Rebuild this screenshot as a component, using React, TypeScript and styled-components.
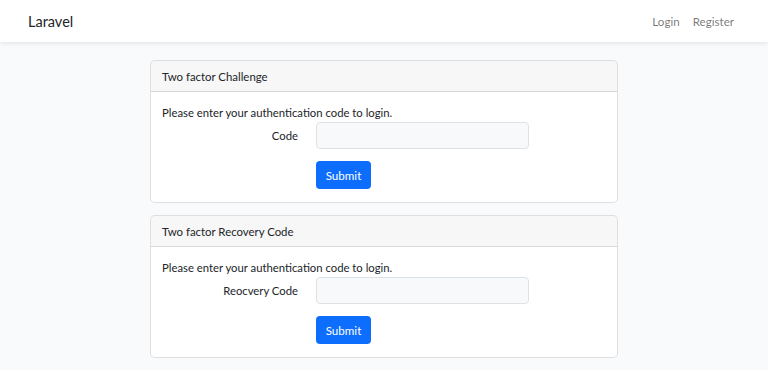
import React from "react";
import styled, { createGlobalStyle } from "styled-components";

const Global = createGlobalStyle`
  body {
    margin: 0;
    background: #f8fafc;
    font-family: "Lato", "Noto Sans", sans-serif;
    color: #212529;
  }
`;

const Navbar = styled.nav`
  height: 42px;
  background: #fff;
  box-shadow: 0 2px 4px rgba(0, 0, 0, 0.075);
  display: flex;
  align-items: center;
  justify-content: space-between;
  padding: 0 34px 0 28px;
`;

const Brand = styled.a`
  font-size: 14.5px;
  color: #212529;
  text-decoration: none;
`;

const NavLinks = styled.div`
  display: flex;
  gap: 13px;
`;

const NavLink = styled.a`
  font-size: 11.6px;
  color: rgba(0, 0, 0, 0.55);
  text-decoration: none;
`;

const Main = styled.main`
  padding-top: 18px;
`;

const Container = styled.div`
  width: 468px;
  margin: 0 auto;
  display: flex;
  flex-direction: column;
  gap: 12px;
`;

const Card = styled.section`
  background: #fff;
  border: 1px solid rgba(0, 0, 0, 0.125);
  border-radius: 5px;
  overflow: hidden;
`;

const CardHeader = styled.div`
  height: 30px;
  display: flex;
  align-items: center;
  padding: 0 11px;
  background: rgba(0, 0, 0, 0.03);
  border-bottom: 1px solid rgba(0, 0, 0, 0.125);
  font-size: 11.4px;
`;

const CardBody = styled.div`
  padding: 12px 11px 13px 11px;
  font-size: 11.3px;
`;

const Intro = styled.p`
  margin: 0;
  line-height: 18px;
`;

const FormGrid = styled.div`
  display: grid;
  grid-template-columns: 136px 213px;
  column-gap: 18px;
  row-gap: 12px;
  align-items: center;
`;

const Label = styled.label`
  text-align: right;
`;

const Input = styled.input`
  box-sizing: border-box;
  height: 27px;
  width: 100%;
  background: #f8f9fa;
  border: 1px solid #dee2e6;
  border-radius: 4px;
  font: inherit;
`;

const SubmitButton = styled.button`
  grid-column: 2;
  justify-self: start;
  height: 28px;
  width: 55px;
  background: #0d6efd;
  color: #fff;
  border: none;
  border-radius: 4px;
  font: inherit;
  font-size: 11.6px;
`;

const Spacer = styled.div``;

function TwoFactorCard({ title, label }: { title: string; label: string }) {
  return (
    <Card>
      <CardHeader>{title}</CardHeader>
      <CardBody>
        <Intro>Please enter your authentication code to login.</Intro>
        <FormGrid>
          <Label>{label}</Label>
          <Input type="text" />
          <Spacer />
          <SubmitButton>Submit</SubmitButton>
        </FormGrid>
      </CardBody>
    </Card>
  );
}

export default function App() {
  return (
    <>
      <Global />
      <Navbar>
        <Brand href="#">Laravel</Brand>
        <NavLinks>
          <NavLink href="#">Login</NavLink>
          <NavLink href="#">Register</NavLink>
        </NavLinks>
      </Navbar>
      <Main>
        <Container>
          <TwoFactorCard title="Two factor Challenge" label="Code" />
          <TwoFactorCard title="Two factor Recovery Code" label="Reocvery Code" />
        </Container>
      </Main>
    </>
  );
}
